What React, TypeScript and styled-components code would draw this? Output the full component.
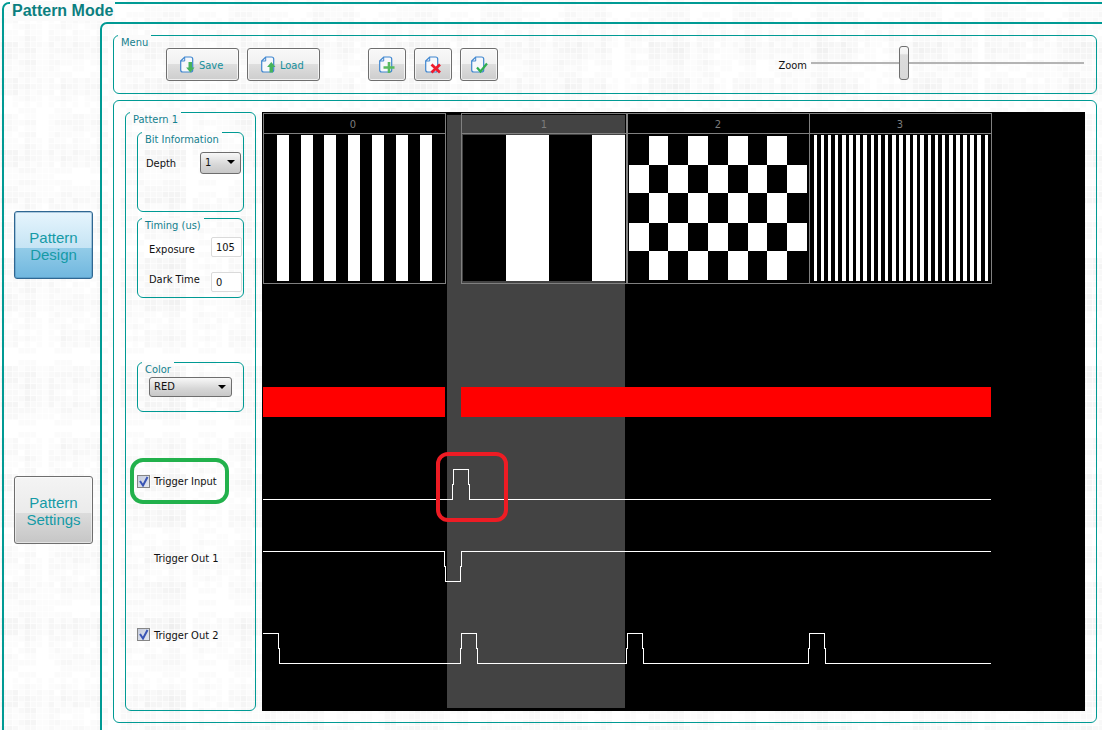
import React from "react";
import styled, { createGlobalStyle } from "styled-components";

const teal = "#009a94";
const ui = '"DejaVu Sans Condensed", "Liberation Sans", Arial, sans-serif';

const Global = createGlobalStyle`
  html, body { margin: 0; padding: 0; background: #fff; }
  body { font-family: ${ui}; font-size: 11px; overflow: hidden; }
`;

const Page = styled.div`
  width: 1102px;
  height: 730px;
  overflow: hidden;
  box-sizing: border-box;
  padding: 2px 0 0 2px;
  background-color: #fff;
  background-image:
    repeating-linear-gradient(90deg, rgba(255,255,255,.6) 0 1px, transparent 1px 6px),
    repeating-linear-gradient(0deg, rgba(255,255,255,.6) 0 1px, transparent 1px 6px),
    conic-gradient(rgba(0,0,0,.016) 25%, transparent 0),
    conic-gradient(rgba(0,0,0,.013) 25%, transparent 0),
    conic-gradient(rgba(0,0,0,.015) 25%, transparent 0),
    conic-gradient(rgba(0,0,0,.013) 25%, transparent 0),
    conic-gradient(rgba(0,0,0,.012) 25%, transparent 0);
  background-size: 6px 6px, 6px 6px, 36px 12px, 12px 60px, 84px 36px, 24px 84px, 132px 108px;
  background-position: 0 0, 0 0, 0 0, 6px 18px, 18px 6px, 12px 30px, 54px 42px;
`;

const OuterFrame = styled.div`
  position: relative;
  width: 1300px;
  height: 900px;
  box-sizing: border-box;
  border: 2px solid ${teal};
  border-radius: 7px;
  display: flex;
  padding-top: 18px;
`;

const MainTitle = styled.h1`
  position: absolute;
  left: 6px;
  top: -3px;
  margin: 0;
  padding: 0 2px;
  background: #fbfbfb;
  color: #0b7f80;
  font: bold 16px/20px "Liberation Sans", Arial, sans-serif;
`;

const NavColumn = styled.nav`
  width: 96px;
  flex: none;
  padding: 189px 0 0 10px;
  box-sizing: border-box;
  display: flex;
  flex-direction: column;
  gap: 197px;
`;

const NavButton = styled.div<{ $active?: boolean }>`
  width: 79px;
  height: 68px;
  box-sizing: border-box;
  border: 1px solid ${(p) => (p.$active ? "#2f6792" : "#6e6e6e")};
  border-radius: 3px;
  display: flex;
  align-items: center;
  justify-content: center;
  text-align: center;
  padding-top: 2px;
  color: #159aa6;
  font: 15px/17px "Liberation Sans", Arial, sans-serif;
  background: ${(p) =>
    p.$active
      ? "linear-gradient(#e6f5fd 0, #c6e4f4 54%, #93cce8 54%, #70b7df 100%)"
      : "linear-gradient(#f4f4f4 0, #ebebeb 54%, #dcdcdc 54%, #c6c6c6 100%)"};
  box-shadow: inset 0 0 0 1px ${(p) => (p.$active ? "rgba(60,120,165,.35)" : "rgba(255,255,255,.5)")};
`;

const InnerFrame = styled.div`
  width: 1180px;
  height: 860px;
  box-sizing: border-box;
  border: 2px solid ${teal};
  border-radius: 7px;
  padding: 11px 0 0 11px;
  display: flex;
  flex-direction: column;
  gap: 6px;
`;

const Group = styled.section<{ $w: number; $h: number; $mt?: number; $ml?: number }>`
  position: relative;
  width: ${(p) => p.$w}px;
  height: ${(p) => p.$h}px;
  margin-top: ${(p) => p.$mt ?? 0}px;
  margin-left: ${(p) => p.$ml ?? 0}px;
  flex: none;
  box-sizing: border-box;
  border: 1px solid ${teal};
  border-radius: 6px;
`;

const GroupTitle = styled.span`
  position: absolute;
  left: 4px;
  top: -1px;
  padding: 0 3px;
  background: linear-gradient(#fbfbfb, #fbfbfb) no-repeat 0 -2px / 100% 6px;
  color: #13808e;
  font: 11px/15px ${ui};
  white-space: nowrap;
`;

const MenuBar = styled.div`
  height: 100%;
  box-sizing: border-box;
  padding: 12px 12px 0 52px;
  display: flex;
  align-items: flex-start;
  gap: 8px;
`;

const ToolButton = styled.button<{ $wide?: boolean; $ml?: number }>`
  width: ${(p) => (p.$wide ? 73 : 38)}px;
  height: 33px;
  margin-left: ${(p) => p.$ml ?? 0}px;
  padding: 2px 0 0 ${(p) => (p.$wide ? 13 : 10)}px;
  box-sizing: border-box;
  border: 1px solid #6f6f6f;
  border-radius: 3px;
  display: flex;
  align-items: center;
  gap: 0;
  color: #15909c;
  font: 11px ${ui};
  background: linear-gradient(#f8f8f8 0, #f1f1f1 48%, #dedede 50%, #cdcdcd 100%);
  box-shadow: inset 0 0 0 1px rgba(255,255,255,.7);
`;

const ZoomBox = styled.div`
  margin-left: auto;
  display: flex;
  align-items: center;
  gap: 4px;
  height: 34px;
  margin-top: -1px;
`;

const ZoomLabel = styled.span`
  color: #111;
  font: 11px ${ui};
  margin-top: 2px;
`;

const SliderTrack = styled.div`
  position: relative;
  width: 273px;
  height: 2px;
  background: #b4b4b4;
  margin-top: -3px;
`;

const SliderHandle = styled.div`
  position: absolute;
  top: -16px;
  width: 10px;
  height: 34px;
  box-sizing: border-box;
  border: 1px solid #6f6f6f;
  border-radius: 3px;
  background: linear-gradient(#f7f7f7 0, #f2f2f2 22%, #dcdcdc 24%, #d8d8d8 100%);
`;

const Workspace = styled.div`
  height: 100%;
  box-sizing: border-box;
  padding: 11px 0 0 11px;
  display: flex;
  gap: 6px;
`;

const Sidebar = styled.div`
  position: relative;
  width: 131px;
  height: 599px;
  flex: none;
  box-sizing: border-box;
  border: 1px solid ${teal};
  border-radius: 6px;
  padding-top: 19px;
  display: flex;
  flex-direction: column;
`;

const Row = styled.div<{ $pt?: number; $pl?: number; $pr?: number }>`
  display: flex;
  align-items: flex-start;
  justify-content: space-between;
  padding: ${(p) => p.$pt ?? 0}px ${(p) => p.$pr ?? 0}px 0 ${(p) => p.$pl ?? 0}px;
`;

const Label = styled.span<{ $mt?: number }>`
  margin-top: ${(p) => p.$mt ?? 0}px;
  color: #111;
  font: 11px/15px ${ui};
  white-space: nowrap;
`;

const Combo = styled.div<{ $w: number; $h: number }>`
  position: relative;
  width: ${(p) => p.$w}px;
  height: ${(p) => p.$h}px;
  box-sizing: border-box;
  border: 1px solid #6e6e6e;
  border-radius: 3px;
  padding-left: 4px;
  color: #111;
  font: 11px/${(p) => p.$h - 2}px ${ui};
  background: linear-gradient(#f8f8f8, #d6d6d6 60%, #c8c8c8);
`;

const ComboArrow = styled.i`
  position: absolute;
  right: 5px;
  top: 7px;
  border: 4px solid transparent;
  border-top: 4px solid #000;
`;

const NumberField = styled.div`
  width: 31px;
  height: 20px;
  box-sizing: border-box;
  border: 1px solid #dadada;
  border-radius: 2px;
  background: #fff;
  padding-left: 4px;
  color: #111;
  font: 11px/20px ${ui};
`;

const CheckRow = styled.div<{ $mt: number; $pl?: number }>`
  height: 13px;
  margin-top: ${(p) => p.$mt}px;
  padding-left: ${(p) => p.$pl ?? 11}px;
  display: flex;
  align-items: center;
  gap: 4px;
`;

const CheckBox = styled.span`
  width: 13px;
  height: 13px;
  flex: none;
  box-sizing: border-box;
  border: 1px solid #858585;
  background: linear-gradient(135deg, #c4cbdc, #e6e9f1);
  display: block;
`;

const Canvas = styled.div`
  position: relative;
  width: 823px;
  height: 599px;
  flex: none;
  background: #000;
`;

const Chart = styled.svg`
  display: block;
  width: 823px;
  height: 599px;
`;

const Callout = styled.div<{ $c: string; $l: number; $t: number; $w: number; $h: number; $r: number }>`
  position: absolute;
  left: ${(p) => p.$l}px;
  top: ${(p) => p.$t}px;
  width: ${(p) => p.$w}px;
  height: ${(p) => p.$h}px;
  box-sizing: border-box;
  border: 4px solid ${(p) => p.$c};
  border-radius: ${(p) => p.$r}px;
`;

type Badge = "down" | "up" | "plus" | "cross" | "check";

const DocIcon = ({ badge }: { badge: Badge }) => (
  <svg width="19" height="20" viewBox="0 0 19 20" style={{ flex: "none" }}>
    <path
      d="M0.7 5 L4.7 1 H10.5 Q12.7 1 12.7 3 V14 Q12.7 16 10.5 16 H2.7 Q0.7 16 0.7 14 Z"
      fill="#f6f8fb"
      stroke="#3f86cf"
      strokeWidth="1.2"
    />
    <path d="M0.7 5 H4.7 V1" fill="none" stroke="#3f86cf" strokeWidth="1" />
    {badge === "down" && <path d="M8.5 6 H12 V11.5 H14.5 L10.3 16.5 L6.1 11.5 H8.5 Z" fill="#46b35e" />}
    {badge === "up" && <path d="M8.5 16.5 H12 V11 H14.5 L10.3 6 L6.1 11 H8.5 Z" fill="#46b35e" />}
    {badge === "plus" && <path d="M10 6 V17 M4.5 11.5 H15.5" stroke="#57ba5f" strokeWidth="2.6" />}
    {badge === "cross" && <path d="M6.5 8.5 L15 16.5 M15 8.5 L6.5 16.5" stroke="#ee1c2e" strokeWidth="2.8" />}
    {badge === "check" && <path d="M6 11.5 L9.5 15.5 L16 7.5" fill="none" stroke="#2fae4f" strokeWidth="2.2" />}
  </svg>
);

const Tick = () => (
  <svg width="11" height="11" viewBox="0 0 11 11" style={{ display: "block" }}>
    <path d="M2 5 L5 9.5 L9.5 1" fill="none" stroke="#3a55b5" strokeWidth="2" />
  </svg>
);

const stripes0 = [277, 300.7, 324.4, 348, 372, 396, 419.5];
const checker = (() => {
  const xs = [629, 649, 668, 688, 708, 728, 748, 767, 787, 807];
  const ys = [136, 165, 193, 223, 251, 280];
  const out: { x: number; y: number; w: number; h: number }[] = [];
  for (let r = 0; r < 5; r++)
    for (let c = 0; c < 9; c++)
      if ((r + c) % 2 === 1) out.push({ x: xs[c], y: ys[r], w: xs[c + 1] - xs[c], h: ys[r + 1] - ys[r] });
  return out;
})();
const fine = Array.from({ length: 25 }, (_, i) => 813.5 + i * 7.13);

const out2Pulse = (x: number) => `H${x} V648.5 H${x + 1} V633.5 H${x + 16} V648.5 H${x + 17} V663.5`;

const frames = [
  { n: "0", x: 263.5, w: 182, cx: 353 },
  { n: "1", x: 461.5, w: 165, cx: 544 },
  { n: "2", x: 627.5, w: 182, cx: 718 },
  { n: "3", x: 809.5, w: 182, cx: 900 },
];

const Timeline = () => (
  <Chart viewBox="262 112 823 599">
    <rect x="447" y="115" width="178" height="593" fill="#434343" />
    <g shapeRendering="crispEdges">
      <rect x="463" y="135" width="162" height="146" fill="#000" />
      <rect x="506" y="135" width="43" height="146" fill="#fff" />
      <rect x="592" y="135" width="33" height="146" fill="#fff" />
      {stripes0.map((x) => (
        <rect key={x} x={x} y="135" width="12" height="146" fill="#fff" />
      ))}
      {checker.map((c) => (
        <rect key={`${c.x}-${c.y}`} x={c.x} y={c.y} width={c.w} height={c.h} fill="#fff" />
      ))}
      {fine.map((x) => (
        <rect key={x} x={x} y="135" width="3.6" height="146" fill="#fff" />
      ))}
      {frames.map((f) => (
        <g key={f.n} fill="none" stroke="#808080">
          <rect x={f.x} y="113.5" width={f.w} height="170" />
          <path d={`M${f.x} 133.5 H${f.x + f.w}`} />
        </g>
      ))}
      <rect x="263" y="387" width="182" height="30" fill="#f00" />
      <rect x="461" y="387" width="530" height="30" fill="#f00" />
    </g>
    {frames.map((f) => (
      <text key={f.n} x={f.cx} y="128" textAnchor="middle" fill="#7d7d7d" fontSize="11" fontFamily={ui}>
        {f.n}
      </text>
    ))}
    <g fill="none" stroke="#fff" shapeRendering="crispEdges">
      <path d="M263 499.5 H452.5 V484.5 H453.5 V469.5 H468.5 V484.5 H469.5 V499.5 H991" />
      <path d="M263 551.5 H444.5 V566.5 H445.5 V581.5 H460.5 V566.5 H461.5 V551.5 H991" />
      <path
        d={`M263 633.5 H278.5 V648.5 H279.5 V663.5 ${out2Pulse(460.5)} ${out2Pulse(626.5)} ${out2Pulse(808.5)} H991`}
      />
    </g>
  </Chart>
);

export default function App() {
  return (
    <>
      <Global />
      <Page>
        <OuterFrame>
          <MainTitle>Pattern Mode</MainTitle>
          <NavColumn>
            <NavButton $active>
              Pattern
              <br />
              Design
            </NavButton>
            <NavButton>
              Pattern
              <br />
              Settings
            </NavButton>
          </NavColumn>
          <InnerFrame>
            <Group $w={984} $h={59}>
              <GroupTitle>Menu</GroupTitle>
              <MenuBar>
                <ToolButton $wide>
                  <DocIcon badge="down" />
                  Save
                </ToolButton>
                <ToolButton $wide>
                  <DocIcon badge="up" />
                  Load
                </ToolButton>
                <ToolButton $ml={40}>
                  <DocIcon badge="plus" />
                </ToolButton>
                <ToolButton>
                  <DocIcon badge="cross" />
                </ToolButton>
                <ToolButton>
                  <DocIcon badge="check" />
                </ToolButton>
                <ZoomBox>
                  <ZoomLabel>Zoom</ZoomLabel>
                  <SliderTrack>
                    <SliderHandle style={{ left: 88 }} />
                  </SliderTrack>
                </ZoomBox>
              </MenuBar>
            </Group>
            <Group $w={984} $h={623}>
              <Workspace>
                <Sidebar>
                  <GroupTitle>Pattern 1</GroupTitle>
                  <Group $w={107} $h={80} $ml={11}>
                    <GroupTitle>Bit Information</GroupTitle>
                    <Row $pt={19} $pl={8} $pr={2}>
                      <Label $mt={4}>Depth</Label>
                      <Combo $w={41} $h={22}>
                        1
                        <ComboArrow />
                      </Combo>
                    </Row>
                  </Group>
                  <Group $w={107} $h={80} $mt={6} $ml={11}>
                    <GroupTitle>Timing (us)</GroupTitle>
                    <Row $pt={18} $pl={11} $pr={1}>
                      <Label $mt={5}>Exposure</Label>
                      <NumberField>105</NumberField>
                    </Row>
                    <Row $pt={15} $pl={11} $pr={1}>
                      <Label $mt={0}>Dark Time</Label>
                      <NumberField>0</NumberField>
                    </Row>
                  </Group>
                  <Group $w={107} $h={50} $mt={64} $ml={11}>
                    <GroupTitle>Color</GroupTitle>
                    <Row $pt={14} $pl={11}>
                      <Combo $w={83} $h={20}>
                        RED
                        <ComboArrow />
                      </Combo>
                    </Row>
                  </Group>
                  <CheckRow $mt={63}>
                    <CheckBox>
                      <Tick />
                    </CheckBox>
                    <Label>Trigger Input</Label>
                  </CheckRow>
                  <CheckRow $mt={64} $pl={28}>
                    <Label>Trigger Out 1</Label>
                  </CheckRow>
                  <CheckRow $mt={63}>
                    <CheckBox>
                      <Tick />
                    </CheckBox>
                    <Label $mt={2}>Trigger Out 2</Label>
                  </CheckRow>
                  <Callout $c="#22b14c" $l={4} $t={345} $w={99} $h={46} $r={13} />
                </Sidebar>
                <Canvas>
                  <Timeline />
                  <Callout $c="#ed1c24" $l={174} $t={340} $w={72} $h={70} $r={12} />
                </Canvas>
              </Workspace>
            </Group>
          </InnerFrame>
        </OuterFrame>
      </Page>
    </>
  );
}
